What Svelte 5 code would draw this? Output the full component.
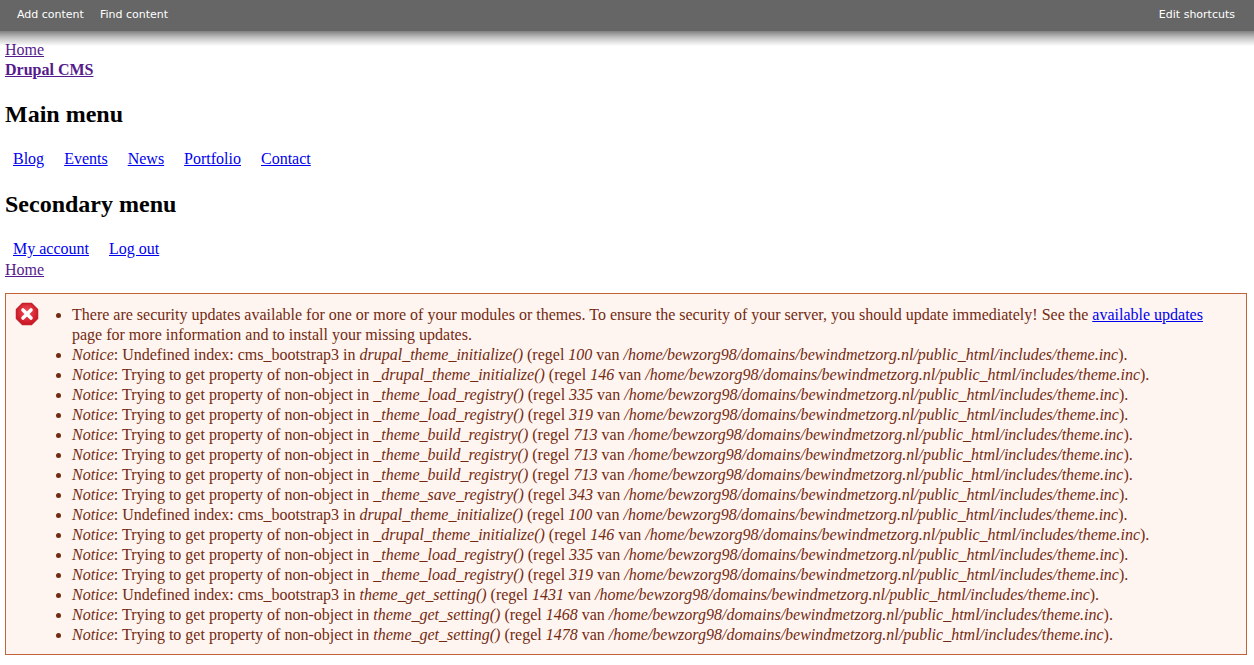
<script>
	const msgs = [
		['Undefined index: cms_bootstrap3 in ', 'drupal_theme_initialize()', '100'],
		['Trying to get property of non-object in ', '_drupal_theme_initialize()', '146'],
		['Trying to get property of non-object in ', '_theme_load_registry()', '335'],
		['Trying to get property of non-object in ', '_theme_load_registry()', '319'],
		['Trying to get property of non-object in ', '_theme_build_registry()', '713'],
		['Trying to get property of non-object in ', '_theme_build_registry()', '713'],
		['Trying to get property of non-object in ', '_theme_build_registry()', '713'],
		['Trying to get property of non-object in ', '_theme_save_registry()', '343'],
		['Undefined index: cms_bootstrap3 in ', 'drupal_theme_initialize()', '100'],
		['Trying to get property of non-object in ', '_drupal_theme_initialize()', '146'],
		['Trying to get property of non-object in ', '_theme_load_registry()', '335'],
		['Trying to get property of non-object in ', '_theme_load_registry()', '319'],
		['Undefined index: cms_bootstrap3 in ', 'theme_get_setting()', '1431'],
		['Trying to get property of non-object in ', 'theme_get_setting()', '1468'],
		['Trying to get property of non-object in ', 'theme_get_setting()', '1478']
	];
	const path = '/home/bewzorg98/domains/bewindmetzorg.nl/public_html/includes/theme.inc';
</script>

<div class="toolbar">
	<div class="shortcuts">
		<a href="#add">Add content</a>
		<a href="#find">Find content</a>
	</div>
	<a href="#edit">Edit shortcuts</a>
</div>

<main>
	<div><a class="visited" href="#home">Home</a></div>
	<div><a class="visited" href="#home"><strong>Drupal CMS</strong></a></div>

	<h2>Main menu</h2>
	<ul class="menu">
		<li><a href="#blog">Blog</a></li>
		<li><a href="#events">Events</a></li>
		<li><a href="#news">News</a></li>
		<li><a href="#portfolio">Portfolio</a></li>
		<li><a href="#contact">Contact</a></li>
	</ul>

	<h2>Secondary menu</h2>
	<ul class="menu">
		<li><a href="#account">My account</a></li>
		<li><a href="#logout">Log out</a></li>
	</ul>

	<div><a class="visited" href="#home">Home</a></div>

	<div class="messages">
		<svg class="icon" width="24" height="24" viewBox="0 0 24 24" aria-hidden="true">
			<defs>
				<radialGradient id="err" cx="50%" cy="40%" r="65%">
					<stop offset="0" stop-color="#f0505a" />
					<stop offset="1" stop-color="#c80f1e" />
				</radialGradient>
			</defs>
			<path
				d="M7.5 1.5h9l6 6v9l-6 6h-9l-6-6v-9z"
				fill="url(#err)"
				stroke="#c4212c"
				stroke-width="1.5"
				stroke-linejoin="round"
			/>
			<path d="M8 8l8 8M16 8l-8 8" stroke="#fff" stroke-width="3.6" stroke-linecap="round" />
		</svg>
		<ul>
			<li>
				There are security updates available for one or more of your modules or themes. To ensure
				the security of your server, you should update immediately! See the
				<a href="#updates">available updates</a> page for more information and to install your
				missing updates.
			</li>
			{#each msgs as m}
				<li>
					<em>Notice</em>: {m[0]}<em>{m[1]}</em> (regel <em>{m[2]}</em> van <em>{path}</em>).
				</li>
			{/each}
		</ul>
	</div>
</main>

<style>
	:global(body) {
		font-family: 'Liberation Serif', 'Times New Roman', serif;
		font-size: 16px;
		line-height: 20px;
		color: #000;
		background: #fff;
	}

	a {
		color: #0000ee;
	}

	a.visited {
		color: #551a8b;
	}

	.toolbar {
		position: relative;
		display: flex;
		justify-content: space-between;
		height: 31px;
		padding: 0 19px 0 17px;
		background: #666;
		font-family: 'DejaVu Sans', Verdana, sans-serif;
		font-size: 11px;
		line-height: 29px;
	}

	/* soft shadow under the bar */
	.toolbar::after {
		content: '';
		position: absolute;
		left: 0;
		right: 0;
		top: 100%;
		height: 15px;
		background: linear-gradient(#808080, #c4c4c4 45%, #ffffff);
	}

	.toolbar a {
		color: #fff;
		text-decoration: none;
	}

	.shortcuts {
		display: flex;
		gap: 16px;
	}

	main {
		position: relative;
		padding: 9px 7px 0 5px;
	}

	h2 {
		margin: 0;
		padding: 24px 0 25px;
		font-size: 24px;
		line-height: 20px;
		font-weight: bold;
	}

	.menu {
		display: flex;
		gap: 20px;
		margin: 0 0 1px;
		padding: 0 8px;
		list-style: none;
	}

	.messages {
		position: relative;
		margin: 13px 0 0;
		padding: 11px 10px 9px 50px;
		border: 1px solid #c0623a;
		background: #fef5f1;
		color: #742a10;
	}

	.icon {
		position: absolute;
		left: 9px;
		top: 8px;
	}

	.messages ul {
		margin: 0;
		padding: 0 0 0 16px;
	}
</style>
